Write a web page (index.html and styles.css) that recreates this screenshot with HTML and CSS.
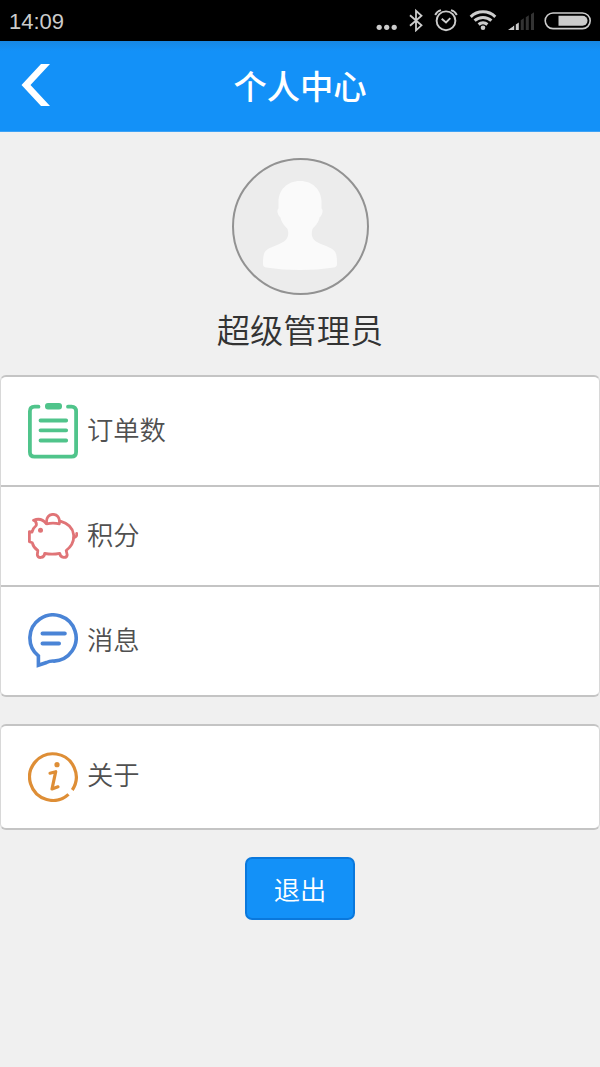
FILE: index.html
```html
<!DOCTYPE html>
<html lang="zh-CN">
<head>
  <meta charset="UTF-8">
  <meta name="viewport" content="width=device-width, initial-scale=1.0">
  <title>个人中心</title>
  <link rel="stylesheet" href="styles.css">
</head>
<body>
  <div class="status-bar">
    <span class="time">14:09</span>
    <div class="status-icons">
      <svg class="dots" width="22" height="24" viewBox="0 0 22 24" fill="#ccc">
        <circle cx="3.2" cy="19.3" r="2.6"/><circle cx="10.7" cy="19.3" r="2.6"/><circle cx="18.2" cy="19.3" r="2.6"/>
      </svg>
      <svg class="bluetooth" width="14" height="24" viewBox="0 0 14 24" fill="none" stroke="#ccc" stroke-width="1.8">
        <path d="M1 7.3 12.5 17.300 7 22.300V2.800L12.500 7.800 1 17.800"/>
      </svg>
      <svg class="alarm" width="24" height="24" viewBox="0 0 24 24" fill="none" stroke="#ccc" stroke-width="1.9">
        <circle cx="12" cy="12.8" r="9.4"/>
        <path d="M7.7 10.8 12 14.5l4.3-4.3M1.2 7C2.3 4.5 4.3 2.8 7 2.1M22.8 7C21.7 4.5 19.7 2.8 17 2.1"/>
      </svg>
      <svg class="wifi" width="28" height="24" viewBox="0 0 28 24" fill="none" stroke="#ccc" stroke-width="3">
        <path d="M1.7 8.8C8.5 2.2 19.5 2.2 26.3 8.8M5.6 12.7C10.3 8.3 17.7 8.3 22.4 12.7M9.6 16.5C12.1 14.3 15.9 14.3 18.4 16.5"/>
        <circle cx="14" cy="19.7" r="2.3" fill="#ccc" stroke="none"/>
      </svg>
      <svg class="signal" width="28" height="24" viewBox="0 0 28 24">
        <path fill="#ccc" d="M1 22 6 18.500V22zM6 18.300l1.200-.8V22H6zM8.800 16.400l3-2V22h-3z"/>
        <path fill="#333" d="M13.8 12.3l3-2V22h-3zM18.8 9.3l3-2V22h-3zM24 6.3l3-2V22h-3z"/>
      </svg>
      <svg class="battery" width="48" height="24" viewBox="0 0 48 24">
        <rect x="1.2" y="5" width="45" height="15.6" rx="7.8" fill="none" stroke="#ccc" stroke-width="1.6"/>
        <path fill="#ccc" d="M14.500 7.800h24a5 5 0 0 1 0 10h-24z"/>
      </svg>
    </div>
  </div>

  <header class="header">
    <a class="back" href="#" aria-label="返回">
      <svg width="29" height="42" viewBox="0 0 29 42"><path fill="#fff" d="M20 0h9L9.5 21 29 42h-9L.5 21z"/></svg>
    </a>
    <h1>个人中心</h1>
  </header>

  <section class="profile">
    <div class="avatar">
      <svg width="74" height="90" viewBox="0 0 74 90">
        <path fill="#fafafa" d="M37 0C24 0 16 9 15.5 20C15.3 23 15.8 25 15.3 28C13.5 29 14.5 34 17.5 36.5C18.5 42 22 45 24.5 48C26 53 25.5 57 21 60.5C14 65 6 66 2.5 70C0 73 0 79 0 83Q0 85.5 3 86.5Q37 91.5 71 86.5Q74 85.5 74 83C74 79 74 73 71.5 70C68 66 59 64 53 60.5C48.5 57 48 53 49.5 48C52 45 55.5 42 56.5 36.5C59.5 34 60.5 29 58.7 28C58.2 25 58.7 23 58.5 20C58 9 50 0 37 0z"/>
      </svg>
    </div>
    <div class="name">超级管理员</div>
  </section>

  <ul class="list">
    <li class="item">
      <svg width="50" height="56" viewBox="0 0 50 56" fill="none" stroke="#50c48b" stroke-width="3.8" stroke-linecap="round">
        <path d="M10.5 3.7H6.5Q1.9 3.7 1.9 8.3V49Q1.9 53.7 6.5 53.7H43.5Q48.1 53.7 48.1 49V8.3Q48.1 3.7 43.5 3.7H40"/>
        <path d="M12.5 17.5H38.2M12.5 27.3H38.2M12.5 37.5H38.2"/>
        <rect x="17" y="0" width="17" height="6.6" rx="3" fill="#50c48b" stroke="none"/>
      </svg>
      <span>订单数</span>
    </li>
    <li class="item">
      <svg width="50" height="46" viewBox="0 0 50 46" fill="none" stroke="#e07477" stroke-width="2.8" stroke-linejoin="round" stroke-linecap="round">
        <path d="M18 10.5C14.5 5.5 9.5 5.8 5.5 7.2C8.5 8.500 8.700 10.500 8.200 12.500C5.500 14.500 4.600 17 4 19.200L1.400 18.600V28.800L4.300 29.800C5.200 33.500 7.500 36 9.800 37.500L9.300 42C10 45.500 16.200 45.600 16.700 40.300Q24 42 31.700 40.300C32.400 45.500 38.800 45.300 39.200 42L38.200 37.500C49 29 49 13 32.300 8.200"/>
        <path d="M18.7 10.8C16.5-1.8 33.5-1.8 31.3 10.8Q25 9.5 18.7 10.8zM45.8 24.5C48.2 24.2 49 22.500 48.700 20.500"/>
        <circle cx="12.5" cy="17.3" r="2.5" fill="#e07477" stroke="none"/>
      </svg>
      <span>积分</span>
    </li>
    <li class="item">
      <svg width="50" height="55" viewBox="0 0 50 55" fill="none" stroke="#4a84d6" stroke-width="3.6">
        <path d="M10.400 42.900A23.100 23.100 0 1 1 26 48.080Q22 47.800 18.500 49.500L10.400 52.300z"/>
        <path stroke-linecap="round" stroke-width="4" d="M14.5 20.6H36.8M14.5 30.4H31"/>
      </svg>
      <span>消息</span>
    </li>
  </ul>

  <ul class="list">
    <li class="item about">
      <svg width="50" height="50" viewBox="0 0 50 50" fill="none" stroke="#de8e36" stroke-width="3.2" stroke-linecap="round" stroke-linejoin="round">
        <path stroke-linecap="butt" d="M40.5 42.4A23.3 23.3 0 1 1 44.3 38"/>
        <path d="M22 21.2 27.7 19.7 24 37 30 34.8"/>
        <circle cx="29" cy="12.7" r="2.6" fill="#de8e36" stroke="none"/>
      </svg>
      <span>关于</span>
    </li>
  </ul>

  <button class="logout" type="button">退出</button>
</body>
</html>
```
FILE: styles.css
```css
* {
  box-sizing: border-box;
}
body {
  margin: 0;
  min-height: 1067px;
  background: #f0f0f0;
  font-family: "Noto Sans CJK SC", sans-serif;
  color: #333;
}
.status-bar {
  display: flex;
  justify-content: space-between;
  height: 41px;
  padding: 8px 8px 0 9px;
  background: #000;
  color: #ccc;
}
.time {
  font-family: "Liberation Sans", sans-serif;
  font-size: 22px;
  line-height: 28px;
}
.status-icons {
  display: flex;
}
.bluetooth {
  margin-left: 11px;
}
.alarm {
  margin-left: 11px;
}
.wifi {
  margin-left: 11px;
}
.signal {
  margin-left: 10px;
}
.battery {
  margin-left: 9px;
}
.header {
  display: grid;
  grid-template-columns: 80px 1fr 80px;
  align-items: center;
  height: 91px;
  padding-bottom: 2px;
  background: linear-gradient(#1787e2, #1391f8 10px);
  border-bottom: 1px solid #3da2f5;
}
.back {
  display: flex;
  padding-left: 21px;
}
.header h1 {
  margin: 0;
  color: #fff;
  font-size: 33.3px;
  font-weight: 500;
  line-height: 48px;
  text-align: center;
}
.profile {
  display: flex;
  flex-direction: column;
  align-items: center;
  height: 243px;
  padding-top: 26px;
}
.avatar {
  width: 137px;
  height: 137px;
  padding: 21px 0 0 29px;
  border: 2px solid #929292;
  border-radius: 50%;
  background: #ececec;
}
.name {
  margin-top: 9px;
  font-size: 33.3px;
  font-weight: 350;
  line-height: 50px;
}
.list {
  margin: 0 0 27px;
  padding: 0;
  list-style: none;
  background: #fff;
  border: 1px solid #d8d8d8;
  border-top: 2px solid #c4c4c4;
  border-bottom: 2px solid #c4c4c4;
  border-radius: 6px;
}
.item {
  display: flex;
  align-items: center;
  gap: 9px;
  padding: 26px 27px;
  color: #505050;
  font-size: 26.3px;
  font-weight: 350;
  line-height: 40px;
}
.item + .item {
  border-top: 2px solid #c4c4c4;
}
.item + .item:last-child {
  padding-bottom: 27px;
}
.item span {
  margin-top: -4px;
}
.about span {
  margin-top: -6px;
}
.logout {
  display: block;
  width: 110px;
  height: 63px;
  margin: 0 auto;
  padding: 0;
  border: 2px solid #0a78dc;
  border-radius: 7px;
  background: #1391f8;
  color: #fff;
  font-family: inherit;
  font-size: 26.3px;
  font-weight: 350;
}
```
